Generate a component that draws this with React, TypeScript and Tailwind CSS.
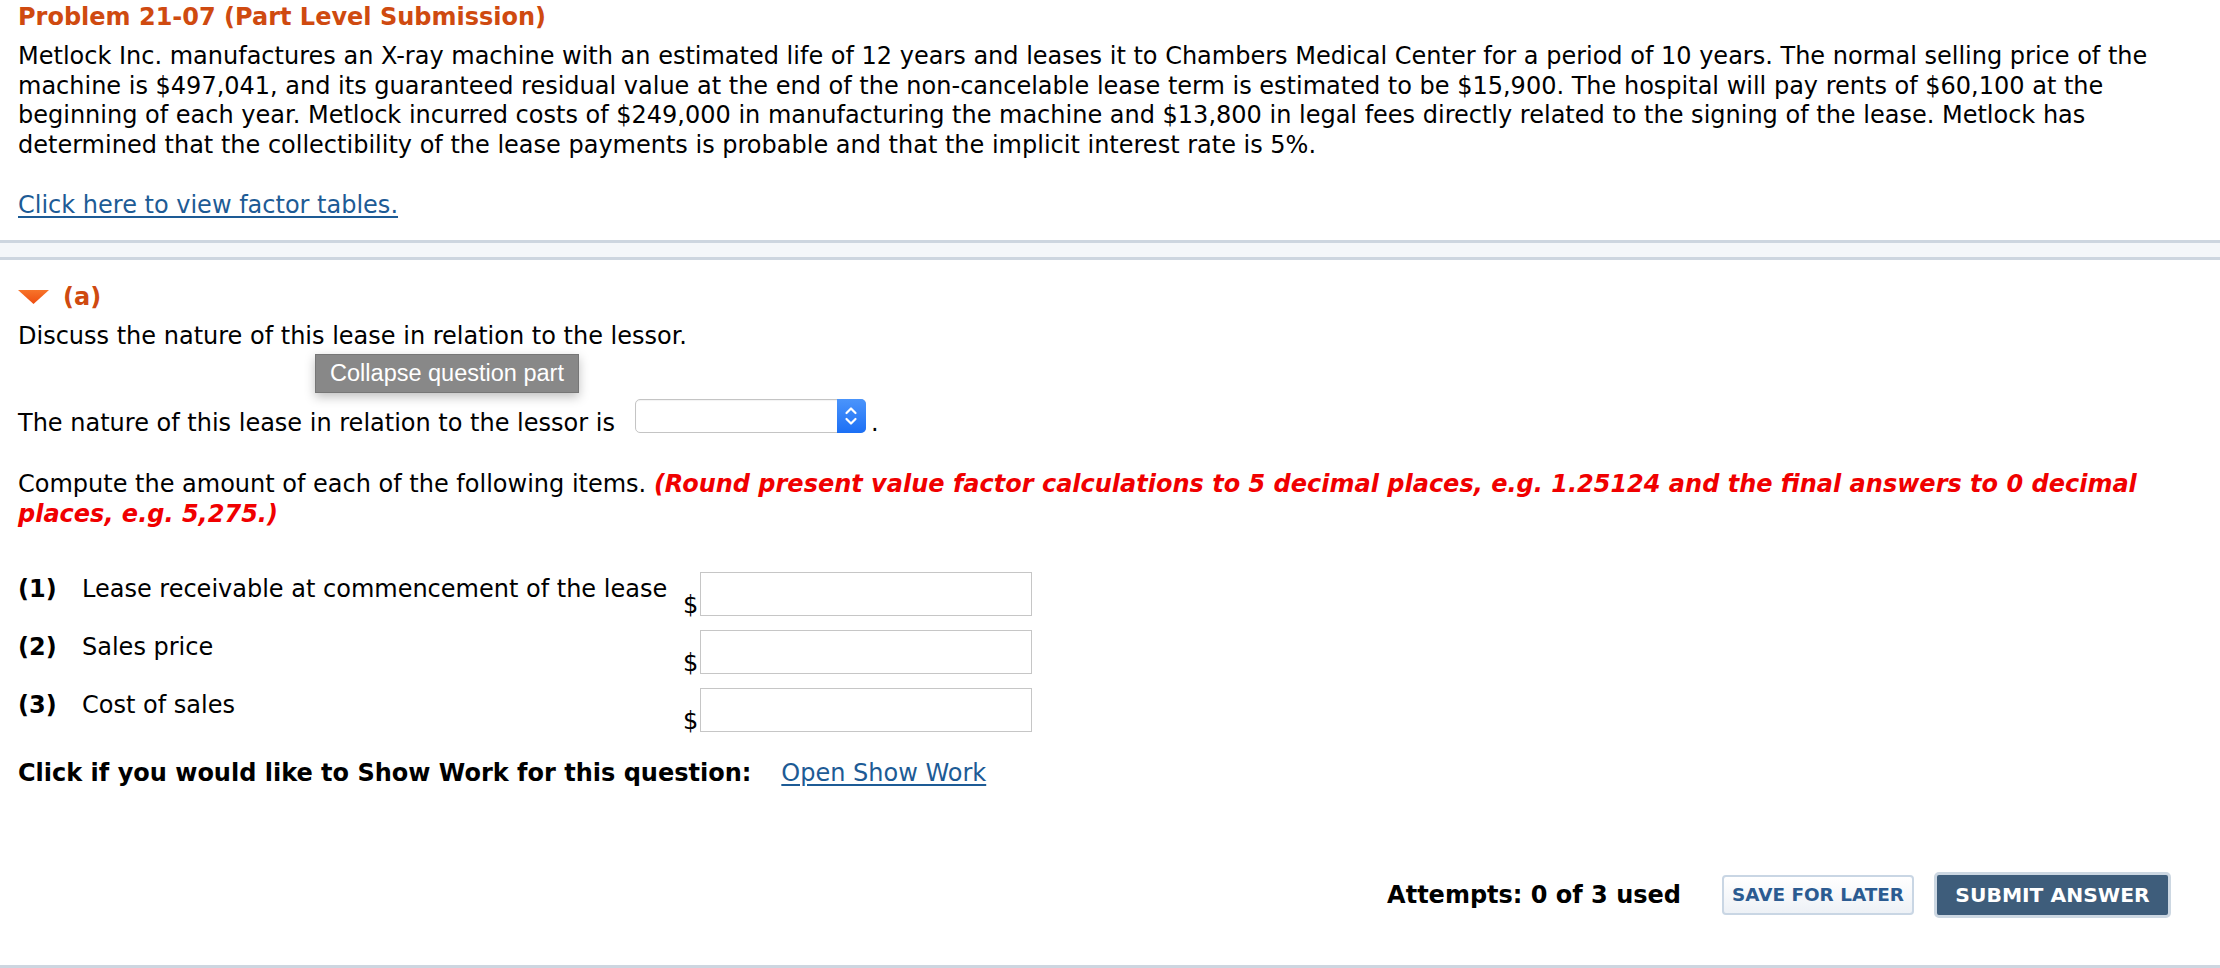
import React from "react";

const rows = [
  { num: "(1)", label: "Lease receivable at commencement of the lease" },
  { num: "(2)", label: "Sales price" },
  { num: "(3)", label: "Cost of sales" },
];

function SelectBox() {
  return (
    <div className="flex h-[34px] w-[231px] rounded-[5px] border border-[#c4c4c4] bg-white shadow-[inset_0_1px_1px_rgba(0,0,0,0.05)]">
      <div className="flex-1" />
      <div className="flex w-[29px] items-center justify-center rounded-r-[5px] bg-gradient-to-b from-[#4a94fb] to-[#1b6ff5] -my-px -mr-px">
        <svg width="14" height="24" viewBox="0 0 14 24" fill="none">
          <path d="M2.5 9 L7 4.5 L11.5 9" stroke="white" strokeWidth="2.2" strokeLinecap="round" strokeLinejoin="round" />
          <path d="M2.5 15 L7 19.5 L11.5 15" stroke="white" strokeWidth="2.2" strokeLinecap="round" strokeLinejoin="round" />
        </svg>
      </div>
    </div>
  );
}

export default function App() {
  return (
    <div className="relative h-[968px] w-full overflow-hidden bg-white font-['DejaVu_Sans',Verdana,sans-serif] text-[24px] leading-[30px] text-black">
      <div className="px-[18px] pt-[2px]">
        <h1 className="font-bold text-[#cf4a10]">Problem 21-07 (Part Level Submission)</h1>
        <p className="mt-[10px] leading-[29.7px]">
          Metlock Inc. manufactures an X-ray machine with an estimated life of 12 years and leases it to Chambers Medical
          Center for a period of 10 years. The normal selling price of the machine is $497,041, and its guaranteed residual
          value at the end of the non-cancelable lease term is estimated to be $15,900. The hospital will pay rents of
          $60,100 at the beginning of each year. Metlock incurred costs of $249,000 in manufacturing the machine and $13,800
          in legal fees directly related to the signing of the lease. Metlock has determined that the collectibility of the
          lease payments is probable and that the implicit interest rate is 5%.
        </p>
        <div className="mt-[29px]">
          <a className="text-[#1d5b95] underline underline-offset-[3px]">Click here to view factor tables.</a>
        </div>
      </div>

      <div className="mt-[20px] h-[20px] border-y-[3px] border-[#cdd6e0] bg-[#f4f7fa]" />

      <div className="relative px-[18px]">
        <div className="mt-[22px] flex items-center gap-[14px]">
          <svg width="31" height="14" viewBox="0 0 31 14">
            <defs>
              <linearGradient id="tri" x1="0" y1="0" x2="0" y2="1">
                <stop offset="0" stopColor="#f7742a" />
                <stop offset="1" stopColor="#ee4d10" />
              </linearGradient>
            </defs>
            <path d="M0 0 H31 L15.5 14 Z" fill="url(#tri)" />
          </svg>
          <span className="font-bold text-[#cf4a10]">(a)</span>
        </div>
        <p className="mt-[10px] leading-[28px]">Discuss the nature of this lease in relation to the lessor.</p>

        <div className="absolute left-[315px] top-[72px] z-10 flex h-[39px] w-[264px] items-center justify-center border border-[#767676] bg-[#888888] font-['Liberation_Sans',Arial,sans-serif] text-[23.5px] text-white shadow-[0_4px_10px_rgba(0,0,0,0.25)]">
          Collapse question part
        </div>

        <div className="mt-[49px] flex items-start">
          <span className="mt-[9px]">The nature of this lease in relation to the lessor is</span>
          <div className="ml-[20px]">
            <SelectBox />
          </div>
          <span className="ml-[5px] mt-[9px]">.</span>
        </div>

        <p className="mt-[31px]">
          Compute the amount of each of the following items.{" "}
          <span className="font-bold italic text-[#f00000]">
            (Round present value factor calculations to 5 decimal places, e.g. 1.25124 and the final answers to 0 decimal
            places, e.g. 5,275.)
          </span>
        </p>

        <div className="mt-[43px] flex flex-col gap-[14px]">
          {rows.map((r) => (
            <div key={r.num} className="flex h-[44px] items-start">
              <span className="mt-[2px] w-[64px] font-bold">{r.num}</span>
              <span className="mt-[2px] w-[601px]">{r.label}</span>
              <span className="mb-[1px] w-[17px] self-end leading-[20px]">$</span>
              <input
                type="text"
                className="h-[44px] w-[332px] border-[1.5px] border-[#c6c6c6] bg-white outline-none"
              />
            </div>
          ))}
        </div>

        <div className="mt-[26px] flex">
          <span className="font-bold">Click if you would like to Show Work for this question:</span>
          <a className="ml-[30px] text-[#1d5b95] underline underline-offset-[3px]">Open Show Work</a>
        </div>

        <div className="mt-[84px] flex items-center justify-end pr-[31px]">
          <span className="font-bold">Attempts: 0 of 3 used</span>
          <button className="ml-[41px] h-[40px] w-[192px] rounded-[4px] border-2 border-[#c9d6e4] bg-gradient-to-b from-white to-[#edf1f6] text-[18.4px] font-bold text-[#2b5b91]">
            SAVE FOR LATER
          </button>
          <button className="ml-[20px] h-[46px] w-[237px] rounded-[5px] border-[3px] border-[#ccd7e2] bg-[#3e5d7b] text-[20.3px] font-bold text-white">
            SUBMIT ANSWER
          </button>
        </div>
      </div>

      <div className="absolute bottom-0 left-0 h-[3px] w-full bg-[#cdd6e0]" />
    </div>
  );
}
